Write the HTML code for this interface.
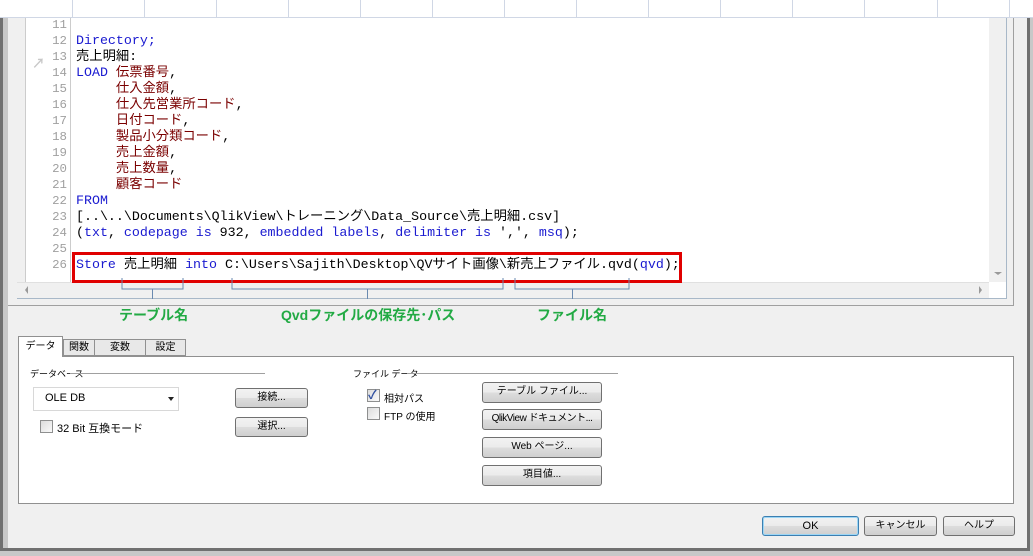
<!DOCTYPE html>
<html><head><meta charset="utf-8"><style>
*{margin:0;padding:0;box-sizing:border-box}
body{width:1033px;height:556px;overflow:hidden;background:#f0f0f0;position:relative;font-family:"Liberation Sans","Noto Sans CJK JP",sans-serif;font-size:11px;color:#000}
.abs{position:absolute}
.code{font-family:"Liberation Mono","Noto Sans CJK JP",monospace;font-size:13.3px;line-height:16px;white-space:pre}
.ln{color:#a0a0a0;text-align:right;width:40px;left:27px;font-size:12.4px}
.kw{color:#1a1ad0}
.fd{color:#7a0000}
.btn{position:absolute;border:1px solid #707070;border-radius:3px;background:linear-gradient(#f2f2f2,#ebebeb 50%,#dddddd 51%,#cfcfcf);text-align:center;font-size:10px;line-height:18px;white-space:nowrap;overflow:hidden}
.lbl{position:absolute;color:#22aa44;font-size:14px;font-weight:bold}
.cb{position:absolute;width:13px;height:13px;border:1px solid #8e8f8f;background:linear-gradient(135deg,#dcdcdc,#fafafa)}
.tab{position:absolute;top:339px;height:17px;background:#e8e8e8;border:1px solid #909090;font-size:10px;line-height:15px;text-align:center;white-space:nowrap}
</style></head><body>
<div class="abs" style="left:0;top:0;width:1033px;height:18px;background:#fff;border-bottom:1px solid #d0d7e5"></div>
<div class="abs" style="left:72px;top:0;width:1px;height:18px;background:#d0d7e5"></div>
<div class="abs" style="left:144px;top:0;width:1px;height:18px;background:#d0d7e5"></div>
<div class="abs" style="left:216px;top:0;width:1px;height:18px;background:#d0d7e5"></div>
<div class="abs" style="left:288px;top:0;width:1px;height:18px;background:#d0d7e5"></div>
<div class="abs" style="left:360px;top:0;width:1px;height:18px;background:#d0d7e5"></div>
<div class="abs" style="left:432px;top:0;width:1px;height:18px;background:#d0d7e5"></div>
<div class="abs" style="left:504px;top:0;width:1px;height:18px;background:#d0d7e5"></div>
<div class="abs" style="left:576px;top:0;width:1px;height:18px;background:#d0d7e5"></div>
<div class="abs" style="left:648px;top:0;width:1px;height:18px;background:#d0d7e5"></div>
<div class="abs" style="left:720px;top:0;width:1px;height:18px;background:#d0d7e5"></div>
<div class="abs" style="left:792px;top:0;width:1px;height:18px;background:#d0d7e5"></div>
<div class="abs" style="left:864px;top:0;width:1px;height:18px;background:#d0d7e5"></div>
<div class="abs" style="left:937px;top:0;width:1px;height:18px;background:#d0d7e5"></div>
<div class="abs" style="left:1009px;top:0;width:1px;height:18px;background:#d0d7e5"></div>
<div class="abs" style="left:0;top:18px;width:3px;height:538px;background:#707070"></div>
<div class="abs" style="left:3px;top:18px;width:5px;height:538px;background:#c8c8c8"></div>
<div class="abs" style="left:1027px;top:18px;width:3px;height:532px;background:#707070"></div>
<div class="abs" style="left:1030px;top:18px;width:3px;height:538px;background:#c8c8c8"></div>
<div class="abs" style="left:0;top:548px;width:1030px;height:3px;background:#707070"></div>
<div class="abs" style="left:0;top:551px;width:1033px;height:5px;background:#c8c8c8"></div>
<div class="abs" style="left:8px;top:18px;width:1006px;height:288px;border-right:1px solid #a0a0a0;border-bottom:1px solid #a0a0a0;background:#f0f0f0"></div>
<div class="abs" style="left:17px;top:18px;width:990px;height:281px;background:#fff;border-right:1px solid #a8b8c8;border-bottom:1px solid #a8b8c8"></div>
<div class="abs" style="left:17px;top:18px;width:9px;height:264px;background:#f0f0f0;border-right:1px solid #ccc"></div>
<div class="abs" style="left:70px;top:18px;width:1px;height:264px;background:#ccc"></div>
<div class="abs" style="left:989px;top:18px;width:17px;height:264px;background:#f0f0f0"></div>
<div class="abs" style="left:994px;top:272px;width:0;height:0;border-left:4px solid transparent;border-right:4px solid transparent;border-top:3px solid #999"></div>
<div class="abs" style="left:17px;top:282px;width:972px;height:16px;background:#f0f0f0;border-top:1px solid #e0e0e0"></div>
<div class="abs" style="left:25px;top:286px;width:0;height:0;border-top:4px solid transparent;border-bottom:4px solid transparent;border-right:3px solid #999"></div>
<div class="abs" style="left:979px;top:286px;width:0;height:0;border-top:4px solid transparent;border-bottom:4px solid transparent;border-left:3px solid #999"></div>
<div class="abs code ln" style="top:17px">11
12
13
14
15
16
17
18
19
20
21
22
23
24
25
26</div>
<div class="abs" style="left:32px;top:53px;color:#c8c8c8;font-size:13px;font-weight:bold">&#x2197;</div>
<div class="abs code" style="left:76px;top:17px">
<span class="kw">Directory;</span>
売上明細:
<span class="kw">LOAD</span> <span class="fd">伝票番号</span>,
     <span class="fd">仕入金額</span>,
     <span class="fd">仕入先営業所コード</span>,
     <span class="fd">日付コード</span>,
     <span class="fd">製品小分類コード</span>,
     <span class="fd">売上金額</span>,
     <span class="fd">売上数量</span>,
     <span class="fd">顧客コード</span>
<span class="kw">FROM</span>
[..\..\Documents\QlikView\トレーニング\Data_Source\売上明細.csv]
(<span class="kw">txt</span>, <span class="kw">codepage is</span> 932, <span class="kw">embedded labels</span>, <span class="kw">delimiter is</span> ',', <span class="kw">msq</span>);

<span class="kw">Store</span> 売上明細 <span class="kw">into</span> C:\Users\Sajith\Desktop\QVサイト画像\新売上ファイル.qvd(<span class="kw">qvd</span>);</div>
<div class="abs" style="left:72px;top:252px;width:610px;height:31px;border:3px solid #e00000"></div>
<svg class="abs" style="left:0;top:277px" width="700" height="30">
<g fill="none" stroke="#6a8ab0" stroke-width="1">
<path d="M122 1 V12 H183 V1 M152.5 12 V22"/>
<path d="M232 1 V12 H503 V1 M367.5 12 V22"/>
<path d="M515 1 V12 H629 V1 M572.5 12 V22"/>
</g></svg>
<div class="lbl" style="left:119px;top:305px">テーブル名</div>
<div class="lbl" style="left:281px;top:305px">Qvdファイルの保存先･パス</div>
<div class="lbl" style="left:537px;top:305px">ファイル名</div>
<div class="tab" style="left:18px;top:336px;width:45px;height:21px;background:#fff;border-bottom:none;line-height:19px;z-index:2">データ</div>
<div class="tab" style="left:63px;width:32px">関数</div>
<div class="tab" style="left:95px;width:51px;border-left:none">変数</div>
<div class="tab" style="left:146px;width:40px;border-left:none">設定</div>
<div class="abs" style="left:18px;top:356px;width:996px;height:148px;background:#fff;border:1px solid #909090"></div>
<div class="abs" style="left:30px;top:367px;font-size:9px">データベース</div>
<div class="abs" style="left:70px;top:373px;width:195px;height:1px;background:#a0a0a0"></div>
<div class="abs" style="left:353px;top:367px;font-size:9px">ファイル データ</div>
<div class="abs" style="left:407px;top:373px;width:211px;height:1px;background:#a0a0a0"></div>
<div class="abs" style="left:33px;top:387px;width:146px;height:24px;border:1px solid #d8d8d8;background:#fff;padding:4px 0 0 11px;font-size:11px">OLE DB</div>
<div class="abs" style="left:168px;top:397px;width:0;height:0;border-left:3.5px solid transparent;border-right:3.5px solid transparent;border-top:4px solid #222"></div>
<div class="cb" style="left:40px;top:420px"></div>
<div class="abs" style="left:57px;top:420px;font-size:11px">32 Bit 互換モード</div>
<div class="btn" style="left:235px;top:388px;width:73px;height:20px">接続...</div>
<div class="btn" style="left:235px;top:417px;width:73px;height:20px">選択...</div>
<div class="cb" style="left:367px;top:389px"></div>
<div class="abs" style="left:368px;top:386px;color:#3050a0;font-size:12px;font-weight:bold">&#x2713;</div>
<div class="abs" style="left:384px;top:390px;font-size:10px">相対パス</div>
<div class="cb" style="left:367px;top:407px"></div>
<div class="abs" style="left:384px;top:408px;font-size:10px">FTP の使用</div>
<div class="btn" style="left:482px;top:382px;width:120px;height:21px">テーブル ファイル...</div>
<div class="btn" style="left:482px;top:409px;width:120px;height:21px;letter-spacing:-0.5px">QlikView ドキュメント...</div>
<div class="btn" style="left:482px;top:437px;width:120px;height:21px">Web ページ...</div>
<div class="btn" style="left:482px;top:465px;width:120px;height:21px">項目値...</div>
<div class="btn" style="left:762px;top:516px;width:97px;height:20px;border-color:#3c7fb1;box-shadow:inset 0 0 0 1px #9cd6f5;font-size:11px">OK</div>
<div class="btn" style="left:864px;top:516px;width:73px;height:20px">キャンセル</div>
<div class="btn" style="left:943px;top:516px;width:72px;height:20px">ヘルプ</div>
</body></html>
